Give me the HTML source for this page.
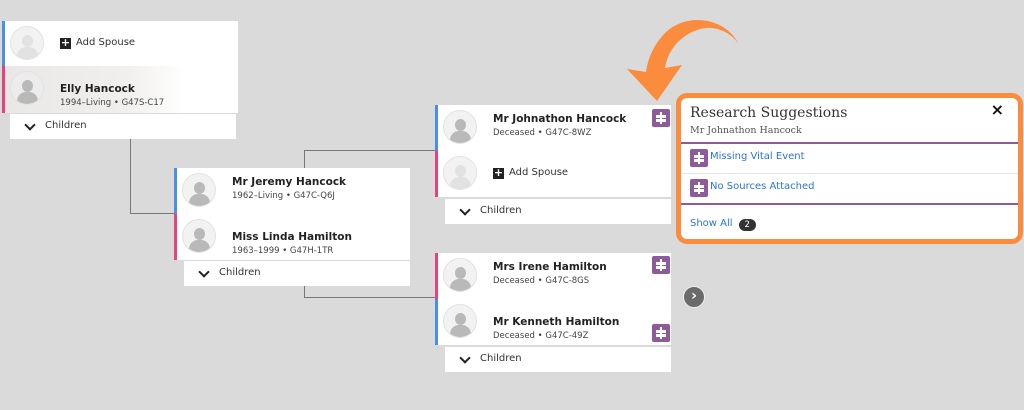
<!DOCTYPE html>
<html><head><meta charset="utf-8"><style>
*{margin:0;padding:0;box-sizing:border-box}
body{width:1024px;height:410px;background:#dadada;font-family:"DejaVu Sans","Liberation Sans",sans-serif;position:relative;overflow:hidden}
.row{position:absolute;width:236px;height:46px;background:#fff}
.row.m{border-left:3px solid #4a8fe7}
.row.f{border-left:3px solid #e8417c}
.av{position:absolute;left:5px;top:5px;width:34px;height:34px;border-radius:50%;background:#f2f2f2;border:1px solid #e2e2e2;overflow:hidden}
.av.g{background:#ececec}
.av i{position:absolute;left:11px;top:8px;width:11px;height:12px;border-radius:50%;background:#b9b9b9}
.av b{position:absolute;left:6px;top:20px;width:21px;height:14px;border-radius:9px 9px 0 0;background:#b9b9b9}
.av.l i,.av.l b{background:#e2e2e2}
.nm{position:absolute;left:55px;top:8px;font-size:10.5px;font-weight:bold;color:#222}
.sb{position:absolute;left:55px;top:23px;font-size:8.5px;color:#444}
.as{position:absolute;left:55px;top:16px;font-size:10px;color:#333}
.as:before{content:"+";display:inline-block;width:11px;height:11px;background:#222;color:#fff;font-size:11px;line-height:10px;text-align:center;font-weight:bold;margin-right:5px;vertical-align:-1px}
.ch{position:absolute;width:226px;height:25px;background:#fff;font-size:10px;color:#333;padding:6px 0 0 35px}
.ch:before{content:"";position:absolute;left:16px;top:7px;width:6px;height:6px;border-right:2px solid #222;border-bottom:2px solid #222;transform:rotate(45deg)}
.ln{position:absolute;background:#777}
.sp{position:absolute;width:18px;height:18px;background:#8d5b9a;border-radius:2px}
.sp:before{content:"";position:absolute;left:8px;top:3px;width:2px;height:12px;background:#fff}
.sp:after{content:"";position:absolute;left:4px;top:6px;width:10px;height:3px;background:#fff;box-shadow:0 4px 0 #fff}
</style></head><body>
<div class="ln" style="left:130px;top:139px;width:1px;height:75px"></div>
<div class="ln" style="left:130px;top:213px;width:44px;height:1px"></div>
<div class="ln" style="left:304px;top:150px;width:1px;height:18px"></div>
<div class="ln" style="left:304px;top:150px;width:131px;height:1px"></div>
<div class="ln" style="left:304px;top:285px;width:1px;height:13px"></div>
<div class="ln" style="left:304px;top:297px;width:131px;height:1px"></div>

<div class="row m" style="left:2px;top:21px"><div class="av l"><i></i><b></b></div><div class="as">Add Spouse</div></div>
<div class="row f" style="left:2px;top:66px;height:47px;background:linear-gradient(90deg,#e9e8e6 0,#f0efed 120px,#fff 180px)"><div class="av g"><i></i><b></b></div><div class="nm" style="top:17px">Elly Hancock</div><div class="sb" style="top:32px">1994–Living • G47S-C17</div></div>
<div class="ch" style="left:10px;top:114px">Children</div>

<div class="row m" style="left:174px;top:168px"><div class="av"><i></i><b></b></div><div class="nm">Mr Jeremy Hancock</div><div class="sb">1962–Living • G47C-Q6J</div></div>
<div class="row f" style="left:174px;top:214px"><div class="av"><i></i><b></b></div><div class="nm" style="top:17px">Miss Linda Hamilton</div><div class="sb" style="top:32px">1963–1999 • G47H-1TR</div></div>
<div class="ch" style="left:184px;top:261px">Children</div>

<div class="row m" style="left:435px;top:105px"><div class="av"><i></i><b></b></div><div class="nm">Mr Johnathon Hancock</div><div class="sb">Deceased • G47C-8WZ</div><div class="sp" style="left:214px;top:4px"></div></div>
<div class="row f" style="left:435px;top:151px"><div class="av l"><i></i><b></b></div><div class="as">Add Spouse</div></div>
<div class="ch" style="left:445px;top:199px">Children</div>

<div class="row f" style="left:435px;top:253px"><div class="av"><i></i><b></b></div><div class="nm">Mrs Irene Hamilton</div><div class="sb">Deceased • G47C-8GS</div><div class="sp" style="left:214px;top:3px"></div></div>
<div class="row m" style="left:435px;top:299px"><div class="av"><i></i><b></b></div><div class="nm" style="top:17px">Mr Kenneth Hamilton</div><div class="sb" style="top:32px">Deceased • G47C-49Z</div><div class="sp" style="left:214px;top:25px"></div></div>
<div class="ch" style="left:445px;top:347px">Children</div>

<div style="position:absolute;left:683px;top:286px;width:22px;height:22px;border-radius:50%;background:#6b6b6b;border:1px solid #eee;color:#fff;font-size:14px;line-height:19px;text-align:center;font-weight:bold">›</div>

<svg style="position:absolute;left:0;top:0" width="1024" height="410">
<path d="M738,43 C725,18 688,12 666,32 C654,44 648,58 646,72 L627,69 L657,101 L682,65 L665,68 C668,50 680,35 700,29 C715,25 730,32 738,43 Z" fill="#fb8c3e"/>
</svg>

<div style="position:absolute;left:676px;top:93px;width:347px;height:151px;border:5px solid #fb8c3e;border-radius:11px;background:#fff;overflow:hidden">
 <div style="position:absolute;left:9px;top:7px;font-family:'DejaVu Serif','Liberation Serif',serif;font-size:14px;color:#333">Research Suggestions</div>
 <div style="position:absolute;left:9px;top:27px;font-family:'DejaVu Serif','Liberation Serif',serif;font-size:9.5px;color:#555">Mr Johnathon Hancock</div>
 <div style="position:absolute;right:14px;top:2px;font-size:16px;font-weight:bold;color:#111">×</div>
 <div style="position:absolute;left:0;top:44px;width:100%;height:2px;background:#8d5b9a"></div>
 <div class="sp" style="left:9px;top:51px"></div>
 <div style="position:absolute;left:29px;top:53px;font-size:10px;color:#2a75d6">Missing Vital Event</div>
 <div style="position:absolute;left:0;top:75px;width:100%;height:1px;background:#e6e6e6"></div>
 <div class="sp" style="left:9px;top:81px"></div>
 <div style="position:absolute;left:29px;top:83px;font-size:10px;color:#2a75d6">No Sources Attached</div>
 <div style="position:absolute;left:0;top:105px;width:100%;height:2px;background:#8d5b9a"></div>
 <div style="position:absolute;left:9px;top:120px;font-size:10px;color:#2a75d6">Show All <span style="display:inline-block;background:#333;color:#fff;border-radius:7px;width:17px;height:12px;line-height:12px;text-align:center;font-size:8.5px;margin-left:3px;vertical-align:-1px">2</span></div>
</div>
</body></html>
